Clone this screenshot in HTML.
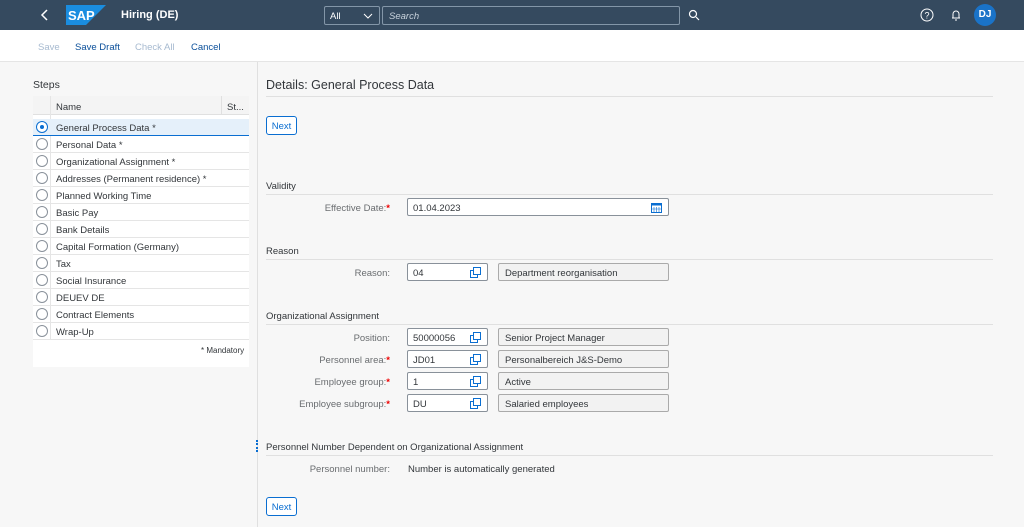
<!DOCTYPE html>
<html><head><meta charset="utf-8"><style>
*{margin:0;padding:0;box-sizing:border-box}
body{width:1024px;height:527px;overflow:hidden;background:#f7f7f7;font-family:"Liberation Sans",sans-serif;position:relative;color:#32363a}
.a{position:absolute;white-space:nowrap}
.hdr{left:0;top:0;width:1024px;height:30px;background:#354a5f}
.tb{left:0;top:30px;width:1024px;height:32px;background:#fff;border-bottom:1px solid #e5e5e5}
.t10{font-size:9.5px}
.lbl{font-size:9.5px;color:#6a6d70;text-align:right;width:200px;left:190px}
.inp{height:18px;border:1px solid #89919a;background:#fff;font-size:9.5px;padding:4px 5px;border-radius:2px}
.ro{height:18px;border:1px solid #aaa;background:#f2f2f2;font-size:9.5px;padding:4px 6px;border-radius:2px;width:171px;left:498px}
.star{color:#e00;font-weight:bold}
.sec{font-size:9.5px;left:266px}
.line{left:266px;width:727px;height:1px;background:#e0e0e0}
.btn{width:31px;height:19px;border:1px solid #0a6ed1;border-radius:3px;background:#fff;color:#0a6ed1;font-size:9.5px;text-align:center;line-height:19px;left:266px}
.row{left:33px;width:216px;height:17px;border-bottom:1px solid #e5e5e5;font-size:9.5px}
.row span{position:absolute;left:23px;top:4px}
.row i{position:absolute;left:3px;top:2px;width:12px;height:12px;border:1px solid #89919a;border-radius:50%;background:#fff}
</style></head><body>
<div class="a hdr"></div>
<svg class="a" style="left:40px;top:9px" width="10" height="12"><path d="M7 1 L2 6 L7 11" stroke="#fff" stroke-width="1.5" fill="none"/></svg>
<svg class="a" style="left:66px;top:5px" width="40" height="20"><path d="M0 0 H40 L20 20 H0 Z" fill="#1a8de0"/><text x="2" y="15" font-family="Liberation Sans" font-weight="bold" font-size="13" fill="#fff">SAP</text></svg>
<div class="a" style="left:121px;top:9px;color:#fff;font-size:11px;font-weight:bold">Hiring (DE)</div>
<div class="a" style="left:324px;top:6px;width:56px;height:19px;border:1px solid #8396a8;border-radius:2px;color:#fff;font-size:9.5px;padding:4px 5px">All<svg style="position:absolute;right:6px;top:6px" width="10" height="6"><path d="M1 1 L5 5 L9 1" stroke="#fff" fill="none"/></svg></div>
<div class="a" style="left:382px;top:6px;width:298px;height:19px;border:1px solid #8396a8;border-radius:2px;color:#c8d2dc;font-size:9.5px;font-style:italic;padding:4px 6px">Search</div>
<svg class="a" style="left:688px;top:9px" width="12" height="12"><circle cx="5" cy="5" r="3.5" stroke="#fff" fill="none" stroke-width="1.2"/><path d="M8 8 L11 11" stroke="#fff" stroke-width="1.2"/></svg>
<svg class="a" style="left:920px;top:8px" width="14" height="14"><circle cx="7" cy="7" r="6" stroke="#fff" fill="none"/><text x="4.5" y="10.5" font-size="9" fill="#fff" font-family="Liberation Sans">?</text></svg>
<svg class="a" style="left:950px;top:8px" width="12" height="14"><path d="M3 10 V6 a3 3 0 0 1 6 0 V10 H2 H10 M5 12 H7" stroke="#fff" fill="none"/></svg>
<div class="a" style="left:974px;top:4px;width:22px;height:22px;border-radius:50%;background:#1a73c8;color:#fff;font-size:10px;font-weight:bold;text-align:center;line-height:22px">DJ</div>

<div class="a tb"></div>
<div class="a t10" style="left:38px;top:42px;color:#a7bad0">Save</div>
<div class="a t10" style="left:75px;top:42px;color:#0a4f9a">Save Draft</div>
<div class="a t10" style="left:135px;top:42px;color:#a7bad0">Check All</div>
<div class="a t10" style="left:191px;top:42px;color:#0a4f9a">Cancel</div>

<div class="a" style="left:33px;top:79px;font-size:10.5px">Steps</div>
<div class="a" style="left:33px;top:96px;width:216px;height:271px;background:#fff"></div>
<div class="a" style="left:33px;top:96px;width:216px;height:19px;background:#f4f4f4;border-bottom:1px solid #e0e0e0"></div>
<div class="a" style="left:50px;top:96px;width:1px;height:243px;background:#e5e5e5"></div>
<div class="a" style="left:221px;top:96px;width:1px;height:19px;background:#e0e0e0"></div>
<div class="a t10" style="left:56px;top:102px">Name</div>
<div class="a t10" style="left:227px;top:102px">St...</div>
<div class="a row" style="top:119px;background:#e5f0fa;border-bottom:1px solid #0a6ed1"><i style="border-color:#0a6ed1"><b style="position:absolute;left:3px;top:3px;width:4px;height:4px;border-radius:50%;background:#0a6ed1"></b></i><span>General Process Data *</span></div>
<div class="a row" style="top:136px"><i></i><span>Personal Data *</span></div>
<div class="a row" style="top:153px"><i></i><span>Organizational Assignment *</span></div>
<div class="a row" style="top:170px"><i></i><span>Addresses (Permanent residence) *</span></div>
<div class="a row" style="top:187px"><i></i><span>Planned Working Time</span></div>
<div class="a row" style="top:204px"><i></i><span>Basic Pay</span></div>
<div class="a row" style="top:221px"><i></i><span>Bank Details</span></div>
<div class="a row" style="top:238px"><i></i><span>Capital Formation (Germany)</span></div>
<div class="a row" style="top:255px"><i></i><span>Tax</span></div>
<div class="a row" style="top:272px"><i></i><span>Social Insurance</span></div>
<div class="a row" style="top:289px"><i></i><span>DEUEV DE</span></div>
<div class="a row" style="top:306px"><i></i><span>Contract Elements</span></div>
<div class="a row" style="top:323px"><i></i><span>Wrap-Up</span></div>
<div class="a" style="left:201px;top:346px;font-size:8px">* Mandatory</div>

<div class="a" style="left:257px;top:62px;width:1px;height:465px;background:#e0e0e0"></div>
<div class="a" style="left:256px;top:440px;width:2px;height:12px;border-left:2px dotted #0a6ed1"></div>

<div class="a" style="left:266px;top:78px;font-size:12.5px">Details: General Process Data</div>
<div class="a line" style="top:96px"></div>
<div class="a btn" style="top:116px">Next</div>

<div class="a sec" style="top:181px">Validity</div>
<div class="a line" style="top:194px"></div>
<div class="a lbl" style="top:203px">Effective Date:<span class="star">*</span></div>
<div class="a inp" style="left:407px;top:198px;width:262px">01.04.2023<svg style="position:absolute;right:6px;top:3px" width="11" height="11"><rect x="0.5" y="1.5" width="10" height="9" fill="none" stroke="#0a6ed1"/><rect x="0.5" y="1.5" width="10" height="2" fill="#0a6ed1"/><path d="M3 5V10M5.5 5V10M8 5V10M1 7H10" stroke="#0a6ed1" stroke-width=".6"/></svg></div>

<div class="a sec" style="top:246px">Reason</div>
<div class="a line" style="top:259px"></div>
<div class="a lbl" style="top:268px">Reason:</div>

<div class="a sec" style="top:311px">Organizational Assignment</div>
<div class="a line" style="top:324px"></div>
<div class="a lbl" style="top:333px">Position:</div>
<div class="a lbl" style="top:355px">Personnel area:<span class="star">*</span></div>
<div class="a lbl" style="top:377px">Employee group:<span class="star">*</span></div>
<div class="a lbl" style="top:399px">Employee subgroup:<span class="star">*</span></div>

<div class="a sec" style="top:442px">Personnel Number Dependent on Organizational Assignment</div>
<div class="a line" style="top:455px"></div>
<div class="a lbl" style="top:464px">Personnel number:</div>
<div class="a t10" style="left:408px;top:464px">Number is automatically generated</div>
<div class="a btn" style="top:497px">Next</div>

<div class="a inp" style="left:407px;top:263px;width:81px">04</div>
<div class="a ro" style="top:263px">Department reorganisation</div>
<div class="a inp" style="left:407px;top:328px;width:81px">50000056</div>
<div class="a ro" style="top:328px">Senior Project Manager</div>
<div class="a inp" style="left:407px;top:350px;width:81px">JD01</div>
<div class="a ro" style="top:350px">Personalbereich J&amp;S-Demo</div>
<div class="a inp" style="left:407px;top:372px;width:81px">1</div>
<div class="a ro" style="top:372px">Active</div>
<div class="a inp" style="left:407px;top:394px;width:81px">DU</div>
<div class="a ro" style="top:394px">Salaried employees</div>

<svg class="a" style="left:470px;top:267px" width="11" height="11"><rect x="0.5" y="3.5" width="7" height="7" fill="none" stroke="#0a6ed1"/><rect x="3.5" y="0.5" width="7" height="7" fill="#fff" stroke="#0a6ed1"/></svg>
<svg class="a" style="left:470px;top:332px" width="11" height="11"><rect x="0.5" y="3.5" width="7" height="7" fill="none" stroke="#0a6ed1"/><rect x="3.5" y="0.5" width="7" height="7" fill="#fff" stroke="#0a6ed1"/></svg>
<svg class="a" style="left:470px;top:354px" width="11" height="11"><rect x="0.5" y="3.5" width="7" height="7" fill="none" stroke="#0a6ed1"/><rect x="3.5" y="0.5" width="7" height="7" fill="#fff" stroke="#0a6ed1"/></svg>
<svg class="a" style="left:470px;top:376px" width="11" height="11"><rect x="0.5" y="3.5" width="7" height="7" fill="none" stroke="#0a6ed1"/><rect x="3.5" y="0.5" width="7" height="7" fill="#fff" stroke="#0a6ed1"/></svg>
<svg class="a" style="left:470px;top:398px" width="11" height="11"><rect x="0.5" y="3.5" width="7" height="7" fill="none" stroke="#0a6ed1"/><rect x="3.5" y="0.5" width="7" height="7" fill="#fff" stroke="#0a6ed1"/></svg>
</body></html>
